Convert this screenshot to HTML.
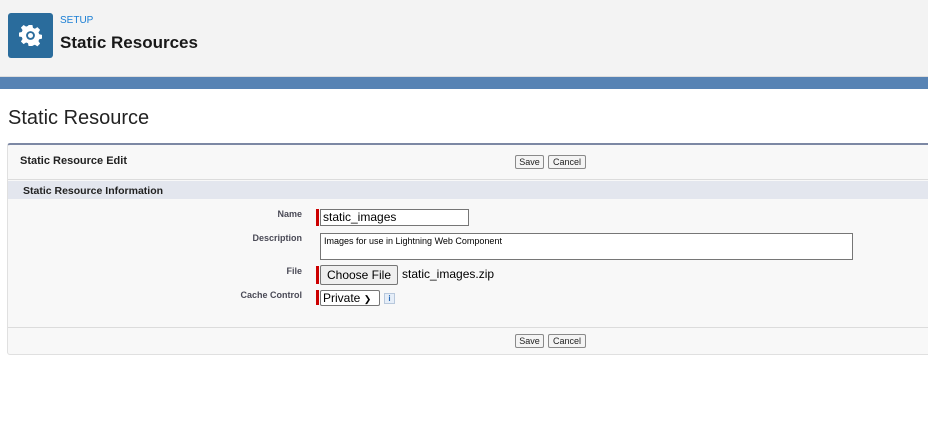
<!DOCTYPE html>
<html><head><style>
*{margin:0;padding:0;box-sizing:border-box}
body{width:928px;height:428px;background:#fff;font-family:"Liberation Sans",Arial,sans-serif;position:relative;overflow:hidden}
.a{position:absolute}
.btn{position:absolute;height:14px;border:1px solid #8a8a8a;border-radius:2px;background:#f4f4f4;font-size:9px;line-height:12px;text-align:center;color:#222}
.lbl{position:absolute;right:626px;font-size:9px;font-weight:bold;color:#4a4a56;text-align:right}
.req{position:absolute;left:316px;width:3px;background:#c00}
</style></head><body>
<div class="a" style="left:0;top:0;width:928px;height:77px;background:#f3f3f3;border-bottom:1px solid #ddd"></div>
<div class="a" style="left:0;top:77px;width:928px;height:12px;background:#5783b4"></div>
<div class="a" style="left:8px;top:13px;width:45px;height:45px;background:#2a6c9c;border-radius:3px"></div>
<svg class="a" style="left:19px;top:24px" width="23" height="23" viewBox="0 0 24 24"><path fill="#fff" d="M10 1h4l.6 3 2 1 2.6-1.7 2.8 2.8L20.3 8.7l.8 2 2.9.6v4l-2.9.6-.8 2 1.7 2.6-2.8 2.8-2.6-1.7-2 .8L14 23h-4l-.6-2.9-2-.8-2.6 1.7L2 18.2l1.7-2.6-.8-2L0 13v-4l2.9-.6.8-2L2 3.8 4.8 1l2.6 1.7 2-.8z"/><circle cx="12" cy="12" r="4.6" fill="#2a6c9c"/><circle cx="12" cy="12" r="2.6" fill="#fff"/></svg>
<div class="a" style="left:60px;top:15px;font-size:10px;color:#1a7ed4">SETUP</div>
<div class="a" style="left:60px;top:33px;font-size:17px;font-weight:bold;color:#181818">Static Resources</div>
<div class="a" style="left:8px;top:107px;font-size:20px;color:#222">Static Resource</div>
<div class="a" style="left:7px;top:143px;width:925px;height:212px;background:#f8f8f8;border:1px solid #e0e0e0;border-top:2px solid #7c88a4;border-radius:3px"></div>
<div class="a" style="left:20px;top:155px;font-size:11px;font-weight:bold;color:#222">Static Resource Edit</div>
<div class="btn" style="left:515px;top:155px;width:29px">Save</div>
<div class="btn" style="left:548px;top:155px;width:38px">Cancel</div>
<div class="a" style="left:8px;top:179px;width:920px;height:1px;background:#dcdcdc"></div>
<div class="a" style="left:8px;top:181px;width:920px;height:18px;background:#e3e6ee"></div>
<div class="a" style="left:23px;top:185px;font-size:10.5px;font-weight:bold;color:#222">Static Resource Information</div>
<div class="lbl" style="top:209px">Name</div>
<div class="lbl" style="top:233px">Description</div>
<div class="lbl" style="top:266px">File</div>
<div class="lbl" style="top:290px">Cache Control</div>
<div class="req" style="top:209px;height:17px"></div>
<div class="a" style="left:320px;top:209px;width:149px;height:17px;border:1px solid #767676;background:#fff;font-size:12px;line-height:15px;padding-left:2px;color:#000">static_images</div>
<div class="a" style="left:320px;top:233px;width:533px;height:27px;border:1px solid #767676;background:#fff;font-size:9px;padding:2px 3px;color:#000">Images for use in Lightning Web Component</div>
<div class="req" style="top:266px;height:18px"></div>
<div class="a" style="left:320px;top:265px;width:78px;height:20px;border:1px solid #767676;background:#efefef;font-size:12px;line-height:18px;text-align:center;color:#000;border-radius:2px">Choose File</div>
<div class="a" style="left:402px;top:267px;font-size:12px;color:#000">static_images.zip</div>
<div class="req" style="top:290px;height:15px"></div>
<div class="a" style="left:320px;top:290px;width:60px;height:16px;border:1px solid #767676;background:#fff;font-size:12px;line-height:14px;padding-left:2px;color:#000;border-radius:2px">Private <span style="font-size:9px">&#10095;</span></div>
<div class="a" style="left:384px;top:293px;width:11px;height:11px;border:1px solid #b8c8dc;background:#e6eef8;font-size:8px;line-height:9px;text-align:center;color:#2a6cb8;font-weight:bold">i</div>
<div class="a" style="left:8px;top:327px;width:920px;height:1px;background:#dcdcdc"></div>
<div class="btn" style="left:515px;top:334px;width:29px">Save</div>
<div class="btn" style="left:548px;top:334px;width:38px">Cancel</div>
</body></html>
